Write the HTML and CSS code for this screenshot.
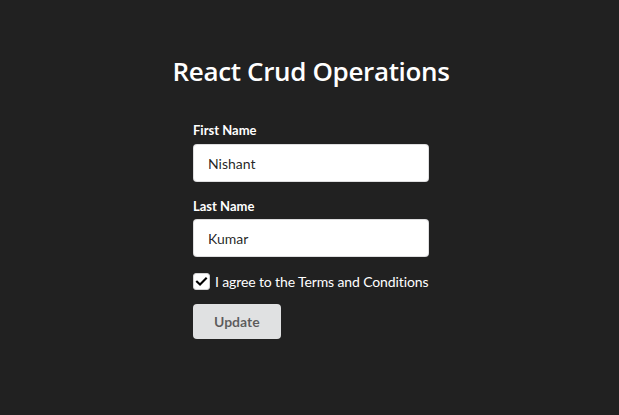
FILE: index.html
```html
<!DOCTYPE html>
<html>
<head>
<meta charset="utf-8">
<link rel="stylesheet" href="styles.css">
</head>
<body>
<div class="main">
  <h2 class="main-header">React Crud Operations</h2>
  <form class="create-form">
    <div class="field">
      <label class="field-label">First Name</label>
      <input class="field-input" type="text" value="Nishant">
    </div>
    <div class="field">
      <label class="field-label">Last Name</label>
      <input class="field-input" type="text" value="Kumar">
    </div>
    <div class="field">
      <div class="checkbox">
        <span class="box">
          <svg viewBox="0 0 16 16" width="13" height="13"><path d="M2.5 8.2 L6.2 11.8 L13.5 4.4" fill="none" stroke="#000" stroke-width="2.6" stroke-linecap="square"/></svg>
        </span>
        <span class="checkbox-label">I agree to the Terms and Conditions</span>
      </div>
    </div>
    <button class="btn" type="button">Update</button>
  </form>
</div>
</body>
</html>
```

FILE: styles.css
```css
html, body {
  margin: 0;
  padding: 0;
  background: #212121;
  height: 100%;
}
body {
  font-family: Lato, "Liberation Sans", sans-serif;
  font-size: 14px;
  line-height: 20px;
  color: #fff;
}
.main {
  display: flex;
  flex-direction: column;
  align-items: center;
  padding-top: 54px;
  padding-left: 3px;
}
.main-header {
  margin: 0;
  font-family: "Open Sans", "Liberation Sans", sans-serif;
  font-weight: 600;
  font-size: 26px;
  line-height: 34px;
  letter-spacing: -0.35px;
  color: #fff;
}
.create-form {
  width: 236px;
  margin-top: 32px;
}
.field {
  margin-bottom: 14px;
}
.field-label {
  display: block;
  font-size: 13px;
  font-weight: 700;
  line-height: 20px;
  margin-bottom: 4px;
  color: #fff;
}
.field + .field .field-label {
  margin-bottom: 3px;
}
.field-input {
  display: block;
  box-sizing: border-box;
  width: 100%;
  height: 38px;
  margin: 0;
  padding: 9.5px 14px;
  font-family: Lato, "Liberation Sans", sans-serif;
  font-size: 14px;
  line-height: 17px;
  color: rgba(0,0,0,.87);
  background: #fff;
  border: 1px solid rgba(34,36,38,.15);
  border-radius: 4px;
  outline: none;
}
.checkbox {
  display: flex;
  align-items: center;
  height: 17px;
  padding-top: 2px;
  white-space: nowrap;
}
.box {
  flex: none;
  width: 17px;
  height: 17px;
  box-sizing: border-box;
  background: #fff;
  border: 1px solid #d4d4d5;
  border-radius: 3px;
  display: flex;
  align-items: center;
  justify-content: center;
}
.checkbox-label {
  margin-left: 5px;
  font-size: 14px;
  letter-spacing: -0.12px;
  color: #fff;
}
.btn {
  display: block;
  margin-top: 13px;
  height: 35px;
  padding: 0 21px;
  font-family: Lato, "Liberation Sans", sans-serif;
  font-size: 14px;
  font-weight: 700;
  color: rgba(0,0,0,.6);
  background: #e0e1e2;
  border: none;
  border-radius: 4px;
}
```
